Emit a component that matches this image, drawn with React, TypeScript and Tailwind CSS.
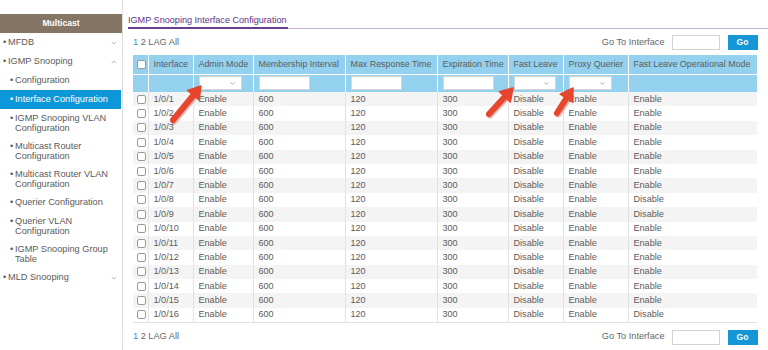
import { ChevronDown, ChevronUp } from "lucide-react";

type NavItem = {
  label: string[];
  level: 0 | 1;
  active?: boolean;
  chevron?: "down" | "up";
};

const nav: NavItem[] = [
  { label: ["MFDB"], level: 0, chevron: "down" },
  { label: ["IGMP Snooping"], level: 0, chevron: "up" },
  { label: ["Configuration"], level: 1 },
  { label: ["Interface Configuration"], level: 1, active: true },
  { label: ["IGMP Snooping VLAN", "Configuration"], level: 1 },
  { label: ["Multicast Router", "Configuration"], level: 1 },
  { label: ["Multicast Router VLAN", "Configuration"], level: 1 },
  { label: ["Querier Configuration"], level: 1 },
  { label: ["Querier VLAN", "Configuration"], level: 1 },
  { label: ["IGMP Snooping Group", "Table"], level: 1 },
  { label: ["MLD Snooping"], level: 0, chevron: "down" },
];

const columns = [
  { title: "", w: "w-[15px]" },
  { title: "Interface", w: "w-[45px]" },
  { title: "Admin Mode", w: "w-[60px]" },
  { title: "Membership Interval", w: "w-[92px]" },
  { title: "Max Response Time", w: "w-[92px]" },
  { title: "Expiration Time", w: "w-[71px]" },
  { title: "Fast Leave", w: "w-[55px]" },
  { title: "Proxy Querier", w: "w-[65px]" },
  { title: "Fast Leave Operational Mode", w: "w-[129px]" },
];

// ports 8, 9 and 16 report Disable in the last column
const rows = Array.from({ length: 16 }, (_, i) => ({
  port: `1/0/${i + 1}`,
  op: [8, 9, 16].includes(i + 1) ? "Disable" : "Enable",
}));

const Checkbox = () => (
  <span className="block w-[9px] h-[9px] rounded-[2px] border border-[#9a9a9a] bg-white ml-[4px]" />
);

const SelectBox = ({ w }: { w: string }) => (
  <div
    className={`${w} h-[14px] bg-white border border-[#d6d6d6] flex items-center justify-end pr-[5px]`}
  >
    <ChevronDown size={7} strokeWidth={2.5} className="text-[#888]" />
  </div>
);

const TextBox = () => <div className="w-[51px] h-[14px] bg-white border border-[#d6d6d6]" />;

const Pager = () => (
  <div className="flex items-center h-[15px]">
    <div className="flex-1 text-[9.2px] text-[#666]">
      <span className="text-[#2a95d0]">1</span> 2 LAG All
    </div>
    <span className="text-[9.2px] text-[#666] mr-[7px]">Go To Interface</span>
    <div className="w-[48px] h-[15px] bg-white border border-[#d3d3d3] mr-[8px]" />
    <button className="w-[30px] h-[15px] bg-[#1596d6] text-white text-[8.5px] font-bold leading-none">
      Go
    </button>
  </div>
);

const Arrow = ({ x1, y1, x2, y2 }: { x1: number; y1: number; x2: number; y2: number }) => {
  const dx = x2 - x1;
  const dy = y2 - y1;
  const len = Math.hypot(dx, dy);
  const ux = dx / len;
  const uy = dy / len;
  const px = -uy;
  const py = ux;
  const head = 12;
  const half = 7.5;
  const bx = x2 - ux * head;
  const by = y2 - uy * head;
  const pts = `${x2},${y2} ${bx + px * half},${by + py * half} ${bx - px * half},${by - py * half}`;
  return (
    <g>
      <line x1={x1} y1={y1} x2={bx + ux * 2} y2={by + uy * 2} stroke="#b83a28" strokeOpacity={0.35} strokeWidth={7} strokeLinecap="round" transform="translate(1,1)" />
      <line x1={x1} y1={y1} x2={bx + ux * 2} y2={by + uy * 2} stroke="#e6452e" strokeWidth={6} strokeLinecap="round" />
      <polygon points={pts} fill="#e6452e" stroke="#e6452e" strokeWidth={1.5} strokeLinejoin="round" />
    </g>
  );
};

export default function App() {
  return (
    <div className="relative w-[768px] h-[350px] flex bg-white overflow-hidden font-['Liberation_Sans',Arial,sans-serif]">
      {/* side navigation */}
      <aside className="w-[123px] shrink-0 pt-[14px] border-r border-[#dedede]">
        <div className="h-[19px] bg-[#857565] text-white text-[8.6px] font-bold flex items-center justify-center">
          Multicast
        </div>
        {nav.map((item, i) => (
          <div
            key={i}
            className={`min-h-[19px] flex items-center py-[3.5px] pr-[4px] text-[9.2px] leading-[10.5px] ${
              item.level === 0 ? "pl-[3px]" : "pl-[10px]"
            } ${item.active ? "bg-[#0e97d8] text-white mr-[1px]" : "text-[#5a5a5a]"}`}
          >
            <span className="w-[5px] self-start shrink-0">•</span>
            <div className="flex-1">
              {item.label.map((l) => (
                <div key={l}>{l}</div>
              ))}
            </div>
            {item.chevron === "down" && <ChevronDown size={8} strokeWidth={2} className="text-[#999]" />}
            {item.chevron === "up" && <ChevronUp size={8} strokeWidth={2} className="text-[#999]" />}
          </div>
        ))}
      </aside>

      {/* main panel */}
      <main className="flex-1 pl-[5px] pt-[14px]">
        <div className="border-b border-[#c6b3d5] flex">
          <div className="text-[9.1px] leading-[12px] text-[#5e3286] pb-[1px] border-b-2 border-[#6a3d8f] -mb-px w-[160px]">
            IGMP Snooping Interface Configuration
          </div>
        </div>

        <div className="pl-[5px] pr-[11px]">
          <div className="mt-[6px]">
            <Pager />
          </div>

          <table className="mt-[5px] table-fixed border-collapse w-[624px] text-[9.1px] text-[#5c5c5c]">
            <thead>
              <tr className="bg-[#93d1ef] h-[19px]">
                {columns.map((c, i) =>
                  i === 0 ? (
                    <th key={i} className={`${c.w} p-0 border-r border-b border-white`}>
                      <Checkbox />
                    </th>
                  ) : (
                    <th
                      key={i}
                      className={`${c.w} p-0 pl-[5px] font-normal text-left whitespace-nowrap overflow-hidden text-[8.9px] border-x border-b border-white`}
                    >
                      {c.title}
                    </th>
                  )
                )}
              </tr>
              <tr className="bg-[#93d1ef] h-[18px]">
                <th className="p-0 border-r border-white" />
                <th className="p-0 border-x border-white" />
                <th className="p-0 pl-[5px] border-x border-white">
                  <SelectBox w="w-[43px]" />
                </th>
                <th className="p-0 pl-[5px] border-x border-white">
                  <TextBox />
                </th>
                <th className="p-0 pl-[5px] border-x border-white">
                  <TextBox />
                </th>
                <th className="p-0 pl-[5px] border-x border-white">
                  <TextBox />
                </th>
                <th className="p-0 pl-[5px] border-x border-white">
                  <SelectBox w="w-[42px]" />
                </th>
                <th className="p-0 pl-[5px] border-x border-white">
                  <SelectBox w="w-[43px]" />
                </th>
                <th className="p-0 border-l border-white" />
              </tr>
            </thead>
            <tbody>
              {rows.map((r, i) => (
                <tr
                  key={r.port}
                  className={`h-[14.4px] leading-none ${i % 2 === 0 ? "bg-[#f4f4f4]" : "bg-white"} ${
                    i === rows.length - 1 ? "border-b border-[#e2e2e2]" : ""
                  }`}
                >
                  <td className="p-0 border-r border-[#e2e2e2]">
                    <Checkbox />
                  </td>
                  <td className="p-0 px-[5px] border-r border-[#e2e2e2]">{r.port}</td>
                  <td className="p-0 px-[5px] border-r border-[#e2e2e2]">Enable</td>
                  <td className="p-0 px-[5px] border-r border-[#e2e2e2]">600</td>
                  <td className="p-0 px-[5px] border-r border-[#e2e2e2]">120</td>
                  <td className="p-0 px-[5px] border-r border-[#e2e2e2]">300</td>
                  <td className="p-0 px-[5px] border-r border-[#e2e2e2]">Disable</td>
                  <td className="p-0 px-[5px] border-r border-[#e2e2e2]">Enable</td>
                  <td className="p-0 px-[5px]">{r.op}</td>
                </tr>
              ))}
            </tbody>
          </table>

          <div className="mt-[7px]">
            <Pager />
          </div>
        </div>
      </main>

      {/* annotation arrows over the filter row */}
      <svg className="absolute inset-0 pointer-events-none" width={768} height={350} viewBox="0 0 768 350">
        <Arrow x1={173} y1={120} x2={201} y2={86} />
        <Arrow x1={489} y1={114} x2={513} y2={88} />
        <Arrow x1={557} y1={113} x2={573} y2={88} />
      </svg>
    </div>
  );
}
